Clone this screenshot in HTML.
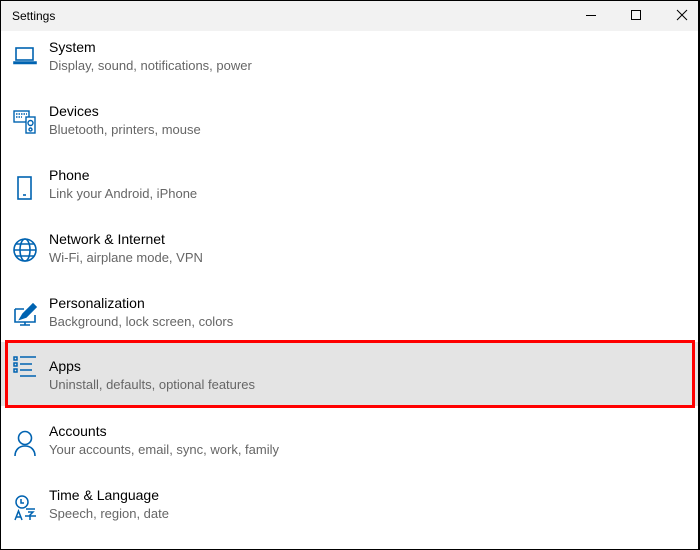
<!DOCTYPE html>
<html><head><style>
*{margin:0;padding:0;box-sizing:border-box}
body{width:700px;height:550px;background:#fff;font-family:"Liberation Sans",sans-serif;position:relative;overflow:hidden}
.frame{position:absolute;left:0;top:0;width:700px;height:550px;border:1px solid #000;border-right-width:2px;z-index:5;pointer-events:none}
.tb{position:absolute;left:0;top:0;width:700px;height:31px;background:#f2f2f2}
.tb .t{position:absolute;left:12px;top:9px;font-size:12px;color:#000}
.row{position:absolute;left:0;width:700px;height:64px}
.row .h{position:absolute;left:49px;top:1px;font-size:14px;color:#000}
.row .s{position:absolute;left:49px;top:20px;font-size:13px;color:#666}
.row svg{position:absolute;left:12px;top:7px}
.sel{background:#e4e4e4}
.box{position:absolute;left:5px;top:340px;width:690px;height:68px;border:3px solid #f00;z-index:4}
</style></head><body>
<div class="tb"><span class="t">Settings</span>
<svg style="position:absolute;left:585px;top:9px" width="12" height="12"><line x1="1" y1="6.5" x2="11" y2="6.5" stroke="#000"/></svg>
<svg style="position:absolute;left:630px;top:9px" width="12" height="12"><rect x="1.5" y="1.5" width="9" height="9" fill="none" stroke="#000"/></svg>
<svg style="position:absolute;left:676px;top:9px" width="12" height="12"><path d="M1 1L11 11M11 1L1 11" stroke="#000"/></svg>
</div>
<div class="row" style="top:38px"><svg width="26" height="26" fill="none" stroke="#0063b1" stroke-width="1.6"><rect x="4" y="3" width="17" height="12"/><path d="M2 17h22v1.5H2z"/></svg><div class="h">System</div><div class="s">Display, sound, notifications, power</div></div>
<div class="row" style="top:102px"><svg width="26" height="26" fill="none" stroke="#0063b1" stroke-width="1.4"><rect x="2" y="2" width="15" height="11"/><path d="M4 5h11M4 8h6" stroke-dasharray="1.5 1"/><rect x="14" y="8" width="9" height="16" fill="#fff"/><circle cx="18.5" cy="14" r="2.5"/><circle cx="18.5" cy="20.5" r="1.5"/></svg><div class="h">Devices</div><div class="s">Bluetooth, printers, mouse</div></div>
<div class="row" style="top:166px"><svg width="26" height="28" fill="none" stroke="#0063b1" stroke-width="1.6"><rect x="6" y="4" width="13" height="22"/><path d="M11 22h3"/></svg><div class="h">Phone</div><div class="s">Link your Android, iPhone</div></div>
<div class="row" style="top:230px"><svg width="26" height="26" fill="none" stroke="#0063b1" stroke-width="1.6"><circle cx="13" cy="13" r="11"/><ellipse cx="13" cy="13" rx="5" ry="11"/><path d="M2 13h22M4 7h18M4 19h18"/></svg><div class="h">Network &amp; Internet</div><div class="s">Wi-Fi, airplane mode, VPN</div></div>
<div class="row" style="top:294px"><svg width="26" height="28" fill="none" stroke="#0063b1" stroke-width="1.6"><path d="M3 8h9M3 8v13h20v-7M8 24h10M13 21v3"/><path d="M8 18l3-5L21 3l3 3-10 10z" fill="#0063b1"/></svg><div class="h">Personalization</div><div class="s">Background, lock screen, colors</div></div>
<div class="row sel" style="top:342px;height:64px"><svg width="26" height="28" fill="none" stroke="#0063b1" stroke-width="1.5" style="top:10px"><rect x="2" y="5" width="3" height="3"/><rect x="2" y="11" width="3" height="3"/><rect x="2" y="17" width="3" height="3"/><path d="M8 5h16M8 12h12M8 18h12M8 24h16"/></svg><div class="h" style="top:16px">Apps</div><div class="s" style="top:35px">Uninstall, defaults, optional features</div></div>
<div class="box"></div>
<div class="row" style="top:422px"><svg width="26" height="28" fill="none" stroke="#0063b1" stroke-width="1.6"><circle cx="13" cy="9" r="6.5"/><path d="M3 27c0-6 4-10 10-10s10 4 10 10"/></svg><div class="h">Accounts</div><div class="s">Your accounts, email, sync, work, family</div></div>
<div class="row" style="top:486px"><svg width="28" height="28" fill="none" stroke="#0063b1" stroke-width="1.5"><circle cx="10" cy="9" r="6"/><path d="M9 6v4h3"/><path d="M3 27l3.5-9 3.5 9M4.5 24h4M14 16h9M16 19h5l-3 3v5M13 23h11" /></svg><div class="h">Time &amp; Language</div><div class="s">Speech, region, date</div></div>
<div class="frame"></div>
</body></html>
